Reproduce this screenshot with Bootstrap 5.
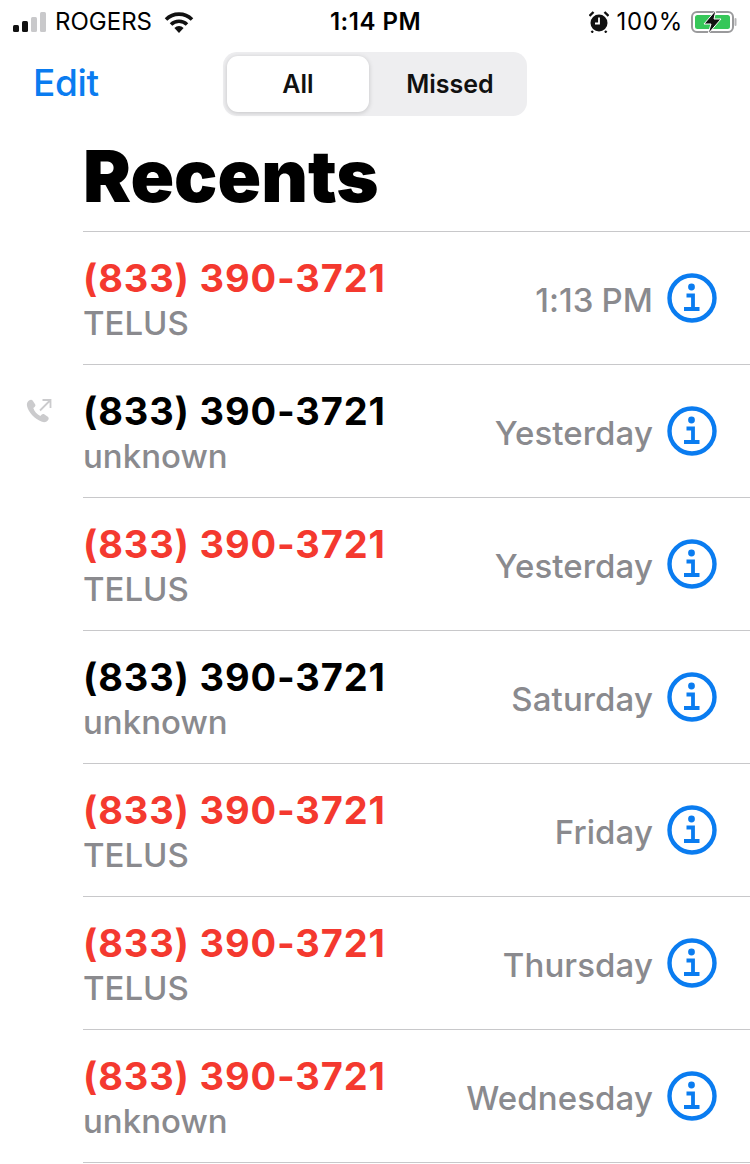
<!DOCTYPE html>
<html lang="en">

<head>
  <meta charset="UTF-8">
  <meta name="viewport" content="width=device-width, initial-scale=1">
  <title>Recents</title>
  <link href="https://cdn.jsdelivr.net/npm/bootstrap@5.3.2/dist/css/bootstrap.min.css" rel="stylesheet">
  <style>
    body {
      font-family: Inter, "Liberation Sans", sans-serif;
      background: #fff;
      color: #000;
      overflow: hidden;
    }

    .status-bar {
      height: 42px;
      padding: 2px 12px 0 13px;
      font-size: 24px;
      line-height: 1;
    }

    .status-side {
      width: 300px;
    }

    .status-pct {
      letter-spacing: .7px;
    }

    .status-time {
      font-size: 24px;
      font-weight: 600;
      letter-spacing: .5px;
    }

    .nav-top {
      height: 84px;
      padding: 10px 0 0 33px;
    }

    .edit-link {
      width: 190px;
      height: 62px;
      color: #0a7cf0;
      font-size: 37px;
      font-weight: 500;
      letter-spacing: -0.3px;
      text-decoration: none;
    }

    .seg-control {
      width: 304px;
      height: 64px;
      padding: 4px;
      background: #eeeef0;
      border-radius: 14px;
    }

    .seg-item {
      font-size: 25px;
      font-weight: 600;
      color: #111;
      padding-top: 2px;
    }

    .seg-missed {
      padding-left: 8px;
    }

    .seg-active {
      width: 142px;
      background: #fff;
      border-radius: 11px;
      box-shadow: 0 1px 5px rgba(0, 0, 0, .18);
    }

    .page-title {
      height: 106px;
      margin: 0 0 0 83px;
      font-size: 72px;
      font-weight: 900;
      letter-spacing: 0;
      line-height: 100px;
      border-bottom: 1px solid #c8c8ca;
    }

    .call-row {
      height: 133px;
    }

    .call-gutter {
      width: 83px;
      padding: 33px 0 0 26px;
    }

    .call-body {
      padding: 4px 33px 0 0;
      border-bottom: 1px solid #c8c8ca;
    }

    .call-number {
      font-size: 38px;
      font-weight: 700;
      line-height: 46px;
      letter-spacing: 0.85px;
    }

    .call-missed {
      color: #f4392f;
    }

    .call-label {
      font-size: 33px;
      font-weight: 500;
      line-height: 44px;
      color: #8a8a8e;
    }

    .call-time {
      padding-top: 5px;
      font-size: 33px;
      font-weight: 500;
      color: #8a8a8e;
      letter-spacing: 0.1px;
      word-spacing: -1px;
    }

    .call-meta {
      gap: 14px;
      margin-top: -4px;
    }
  </style>
  <script src="https://cdn.jsdelivr.net/npm/bootstrap@5.3.2/dist/js/bootstrap.bundle.min.js"></script>
</head>

<body>
  <div class="status-bar d-flex align-items-center justify-content-between">
    <div class="status-side d-flex align-items-center gap-2">
      <svg width="34" height="20" viewBox="0 0 34 20">
        <rect x="0" y="13" width="6" height="7" rx="1.5" fill="#111" />
        <rect x="9" y="9" width="6" height="11" rx="1.5" fill="#111" />
        <rect x="18" y="5" width="6" height="15" rx="1.5" fill="#c9c9cb" />
        <rect x="27" y="0" width="6" height="20" rx="1.5" fill="#c9c9cb" />
      </svg>
      <span>ROGERS</span>
      <svg class="ms-1" width="30" height="22" viewBox="0 0 30 22">
        <path d="M15 22l-4.6-5a6.500 6.500 0 0 1 9.200 0z" fill="#111" />
        <path d="M2 8.500a18.500 18.500 0 0 1 26 0M7 13.500a11.500 11.500 0 0 1 16 0" fill="none" stroke="#111" stroke-width="3.600" />
      </svg>
    </div>
    <div class="status-time">1:14 PM</div>
    <div class="status-side d-flex align-items-center justify-content-end gap-2">
      <svg width="20" height="22" viewBox="0 0 20 22">
        <circle cx="10" cy="12" r="8.500" fill="#111" />
        <path d="M10 6.500V12.500H6" fill="none" stroke="#fff" stroke-width="1.800" />
        <path d="M0.500 5l4-4M19.500 5l-4-4M4 20l-1.500 1.500M16 20l1.500 1.500" stroke="#111" stroke-width="2.400" fill="none" />
      </svg>
      <span class="status-pct">100%</span>
      <svg width="47" height="24" viewBox="0 0 47 24">
        <rect x="1" y="2" width="41" height="20" rx="5" fill="none" stroke="#9a9a9c" stroke-width="2" />
        <rect x="4" y="5" width="35" height="14" rx="2.500" fill="#36c759" />
        <path d="M44.500 9v6" stroke="#b5b5b7" stroke-width="2" stroke-linecap="round" />
        <path d="M25 0L13 14h7l-3 10 13-15h-7z" fill="#111" stroke="#fff" stroke-width="1" />
      </svg>
    </div>
  </div>

  <div class="nav-top d-flex align-items-start">
    <a class="edit-link d-flex align-items-center" href="#">Edit</a>
    <div class="seg-control d-flex">
      <div class="seg-item seg-active d-flex align-items-center justify-content-center">All</div>
      <div class="seg-item seg-missed flex-fill d-flex align-items-center justify-content-center">Missed</div>
    </div>
  </div>

  <h1 class="page-title">Recents</h1>

  <div id="calls"></div>

  <script>
    const calls = [
      ['TELUS', '1:13 PM', true, false],
      ['unknown', 'Yesterday', false, true],
      ['TELUS', 'Yesterday', true, false],
      ['unknown', 'Saturday', false, false],
      ['TELUS', 'Friday', true, false],
      ['TELUS', 'Thursday', true, false],
      ['unknown', 'Wednesday', true, false]
    ];
    const outgoing = `<svg width="27" height="27" viewBox="0 0 27 27">
      <path d="M3 2.500c1.500-1 3-1 3.800.3l2.300 3.500c.6 1 .4 2-.5 2.700l-1.300 1c1 3.400 3.800 6.500 7 8l1.200-1.300c.8-.8 1.800-1 2.700-.4l3.600 2.400c1.200.8 1.200 2.300.2 3.500-1.500 1.800-3.500 2.500-6 1.600C8.500 21 2.500 14.500 1 8c-.5-2.300.4-4.300 2-5.500z" fill="#cbcbcd" />
      <path d="M14 12.500L24 2.500M16.500 2h8v8" fill="none" stroke="#cbcbcd" stroke-width="1.800" />
    </svg>`;
    const info = `<svg width="50" height="50" viewBox="0 0 50 50">
      <circle cx="25" cy="25" r="22.500" fill="none" stroke="#0a7cf0" stroke-width="4.400" />
      <circle cx="24.500" cy="14" r="3.400" fill="#0a7cf0" />
      <path d="M19.500 22.500h6.500v13M17 36h15.500" fill="none" stroke="#0a7cf0" stroke-width="3.800" />
    </svg>`;
    document.getElementById('calls').innerHTML = calls.map(([label, time, missed, out]) => `
      <div class="call-row d-flex">
        <div class="call-gutter flex-shrink-0">${out ? outgoing : ''}</div>
        <div class="call-body flex-fill d-flex align-items-center justify-content-between">
          <div>
            <div class="call-number${missed ? ' call-missed' : ''}">(833) 390-3721</div>
            <div class="call-label">${label}</div>
          </div>
          <div class="call-meta d-flex align-items-center">
            <span class="call-time">${time}</span>
            ${info}
          </div>
        </div>
      </div>`).join('');
  </script>
</body>

</html>
